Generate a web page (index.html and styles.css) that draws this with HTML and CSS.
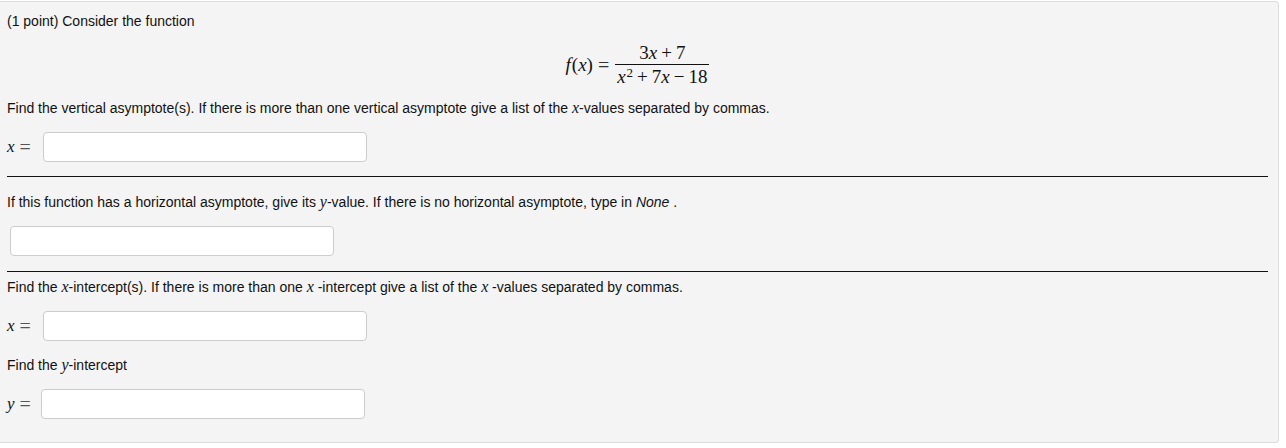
FILE: index.html
```html
<!DOCTYPE html>
<html>
<head>
<meta charset="utf-8">
<link rel="stylesheet" href="styles.css">
</head>
<body>
<div class="panel">
  <p class="intro">(1 point) Consider the function</p>
  <div class="display">
    <span class="mi mf">f</span><span class="mo">(</span><span class="mi">x</span><span class="mo">)</span><span class="rel">=</span><span class="frac"><span class="num"><span class="mn">3</span><span class="mi">x</span><span class="bin">+</span><span class="mn">7</span></span><span class="den"><span class="mi">x</span><sup class="sup">2</sup><span class="bin">+</span><span class="mn">7</span><span class="mi">x</span><span class="bin">−</span><span class="mn">18</span></span></span>
  </div>
  <p class="q q-first">Find the vertical asymptote(s). If there is more than one vertical asymptote give a list of the <span class="im">x</span>-values separated by commas.</p>
  <div class="answer"><span class="lbl"><span class="im">x</span><span class="eq">=</span></span><span class="box"></span></div>
  <div class="rule"></div>
  <p class="q q-after-rule">If this function has a horizontal asymptote, give its <span class="im">y</span>-value. If there is no horizontal asymptote, type in <em>None</em> .</p>
  <div class="answer bare"><span class="box"></span></div>
  <div class="rule rule-2"></div>
  <p class="q q-after-rule2">Find the <span class="im">x</span>-intercept(s). If there is more than one <span class="im">x</span> -intercept give a list of the <span class="im">x</span> -values separated by commas.</p>
  <div class="answer answer-3"><span class="lbl"><span class="im">x</span><span class="eq">=</span></span><span class="box"></span></div>
  <p class="q q-y">Find the <span class="im">y</span>-intercept</p>
  <div class="answer answer-4"><span class="lbl lbl-y"><span class="im">y</span><span class="eq">=</span></span><span class="box"></span></div>
</div>
</body>
</html>
```
FILE: styles.css
```css
html, body {
  margin: 0;
  padding: 0;
  background: #ffffff;
}
body {
  font-family: "Liberation Sans", Arial, sans-serif;
  font-size: 14px;
  color: #111;
}
.panel {
  margin-top: 1px;
  padding: 12px 10px 23px 7px;
  background: #f4f4f4;
  border: 1px solid #dcdcdc;
  border-left: none;
  border-radius: 0 4px 4px 0;
  box-sizing: border-box;
  height: 442px;
  width: 1279px;
}
p {
  margin: 0;
  line-height: 15px;
}
.display {
  margin-top: 12px;
  height: 48px;
  display: flex;
  justify-content: center;
  align-items: center;
  font-family: "Liberation Serif", "Times New Roman", serif;
  font-size: 19px;
  color: #111;
}
.mi { font-style: italic; }
.mf { margin-right: 1px; }
.mo, .mn { font-style: normal; }
.rel { margin: 0 6px 0 5px; color: #333; font-size: 20px; }
.bin { margin: 0 4px; }
.frac {
  display: inline-flex;
  flex-direction: column;
  align-items: center;
  vertical-align: middle;
}
.num {
  padding: 0 4px 1px;
  line-height: 21px;
}
.den {
  border-top: 1px solid #111;
  padding: 1px 2px 0;
  line-height: 21px;
}
.sup {
  font-size: 13px;
  vertical-align: 0;
  position: relative;
  top: -6px;
  margin-left: 1px;
}
.q-first { margin-top: 11px; }
.im {
  font-family: "Liberation Serif", "Times New Roman", serif;
  font-style: italic;
  font-size: 16px;
}
em { font-style: italic; }
.answer {
  display: flex;
  align-items: center;
  margin-top: 16px;
  height: 30px;
}
.lbl {
  width: 36px;
  display: inline-flex;
  align-items: center;
  font-family: "Liberation Serif", "Times New Roman", serif;
}
.lbl .im { font-size: 17px; }
.lbl-y { width: 34px; }
.eq {
  font-size: 20px;
  color: #555;
  margin-left: 5px;
}
.box {
  display: block;
  width: 322px;
  height: 28px;
  background: #ffffff;
  border: 1px solid #cccccc;
  border-radius: 4px;
}
.bare { margin-left: 3px; }
.rule {
  margin-top: 14px;
  height: 0;
  border-top: 1px solid #111;
}
.q-after-rule { margin-top: 17px; }
.rule-2 { margin-top: 15px; }
.q-after-rule2 { margin-top: 7px; }
.answer-3 { margin-top: 16px; }
.q-y { margin-top: 16px; }
.answer-4 { margin-top: 16px; }
```
